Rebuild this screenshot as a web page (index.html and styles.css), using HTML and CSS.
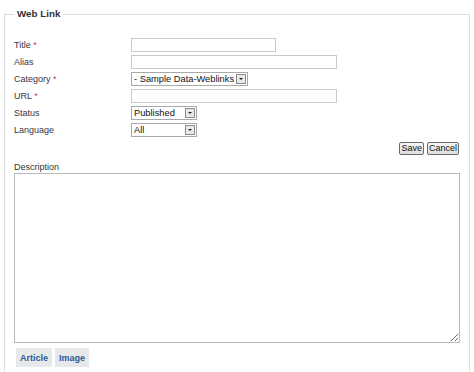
FILE: index.html
```html
<!DOCTYPE html>
<html lang="en">
<head>
    <meta charset="UTF-8">
    <title>Web Link</title>
    <link rel="stylesheet" href="styles.css">
</head>
<body>
    <form class="weblink">
        <fieldset class="panel">
            <legend>Web Link</legend>

            <div class="fields">
                <label for="title">Title <span class="star">*</span></label>
                <div><input type="text" id="title" class="inputbox inputbox--short"></div>

                <label for="alias">Alias</label>
                <div><input type="text" id="alias" class="inputbox"></div>

                <label for="catid">Category <span class="star">*</span></label>
                <div>
                    <span class="dropdown dropdown--wide">
                        <select id="catid"><option>- Sample Data-Weblinks</option></select>
                        <span class="dropdown__arrow"></span>
                    </span>
                </div>

                <label for="url">URL <span class="star">*</span></label>
                <div><input type="text" id="url" class="inputbox"></div>

                <label for="state">Status</label>
                <div>
                    <span class="dropdown">
                        <select id="state"><option>Published</option><option>Unpublished</option></select>
                        <span class="dropdown__arrow"></span>
                    </span>
                </div>

                <label for="language">Language</label>
                <div>
                    <span class="dropdown">
                        <select id="language"><option>All</option></select>
                        <span class="dropdown__arrow"></span>
                    </span>
                </div>
            </div>

            <div class="actions">
                <button type="button" class="btn">Save</button>
                <button type="button" class="btn">Cancel</button>
            </div>

            <label for="description" class="desc-label">Description</label>
            <textarea id="description" class="editor"></textarea>

            <div class="editor-buttons">
                <button type="button" class="editor-btn">Article</button>
                <button type="button" class="editor-btn">Image</button>
            </div>
        </fieldset>
    </form>
</body>
</html>
```

FILE: styles.css
```css
* { box-sizing: border-box; }

body {
    margin: 8px 4px 0;
    font-family: "Liberation Sans", Arial, sans-serif;
    font-size: 9px;
    color: #333;
    background: #fff;
}

.panel {
    margin: 0;
    padding: 0 9px 4px;
    border: 1px solid #dcdcdc;
    border-bottom: 0;
}

.panel legend {
    padding: 0 3px;
    font-size: 9.8px;
    font-weight: bold;
    color: #333;
    line-height: 12px;
}

.fields {
    display: grid;
    grid-template-columns: 117px 1fr;
    grid-auto-rows: 17px;
    align-items: center;
    margin-top: 16px;
}

.fields label {
    color: #3a3344;
}

.star { color: #d43a3a; }

.inputbox {
    display: block;
    width: 206px;
    height: 14px;
    margin: 0;
    padding: 0 2px;
    border: 1px solid #c9c9c9;
    font: inherit;
}

.inputbox--short { width: 145px; }

.dropdown {
    position: relative;
    display: block;
    width: 66px;
    height: 14px;
    border: 1px solid #a9a9a9;
    background: #fff;
}

.dropdown--wide { width: 117px; }

.dropdown select {
    appearance: none;
    width: 100%;
    height: 100%;
    margin: 0;
    padding: 0 0 0 2px;
    border: 0;
    background: transparent;
    font-family: inherit;
    font-size: 9.3px;
    color: #111;
    line-height: 12px;
}

.dropdown__arrow {
    position: absolute;
    top: 1px;
    right: 1px;
    width: 10px;
    height: 10px;
    border: 1px solid #8c8c8c;
    background: #e8e8e8;
    pointer-events: none;
}

.dropdown__arrow::after {
    content: "";
    position: absolute;
    left: 2px;
    top: 3px;
    border-left: 2px solid transparent;
    border-right: 2px solid transparent;
    border-top: 2px solid #222;
}

.actions {
    display: flex;
    justify-content: flex-end;
    gap: 3px;
    margin-top: 4px;
    padding-right: 1px;
}

.btn {
    height: 13px;
    margin: 0;
    padding: 0 1px;
    border: 1px solid #6a6a6a;
    border-radius: 2px;
    background: linear-gradient(#f6f6f6, #dedede);
    font-family: inherit;
    font-size: 9px;
    line-height: 11px;
    color: #111;
}

.desc-label {
    display: block;
    margin-top: 7px;
    line-height: 11px;
}

.editor {
    display: block;
    width: 100%;
    height: 170px;
    margin: 0;
    border: 1px solid #b9b9b9;
    font: inherit;
}

.editor-buttons {
    display: flex;
    gap: 3px;
    margin: 5px 0 0 2px;
}

.editor-btn {
    height: 19px;
    margin: 0;
    padding: 0 4px;
    border: 0;
    background: #e6e8ea;
    font-family: inherit;
    font-size: 9px;
    font-weight: bold;
    color: #2b5a96;
}
```
